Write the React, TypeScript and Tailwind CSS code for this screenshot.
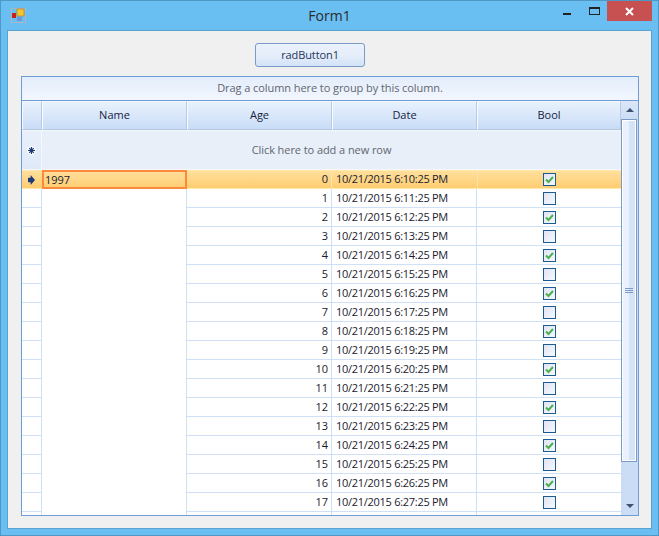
const rows = Array.from({ length: 19 }, (_, i) => i);

function time(i: number) {
  const m = 10 + i;
  return `10/21/2015 6:${m}:25 PM`;
}

function CheckBox({ checked }: { checked: boolean }) {
  return (
    <div className="flex h-[13px] w-[13px] items-center justify-center border border-[#1c5b92] bg-gradient-to-br from-[#dfe5f4] to-[#f6f8fd]">
      {checked && (
        <svg width="11" height="11" viewBox="0 0 11 11">
          <path d="M2 5.5 L4.5 8 L9 3" fill="none" stroke="#4cb04c" strokeWidth="2" />
        </svg>
      )}
    </div>
  );
}

function HeaderCell({ label, className }: { label: string; className: string }) {
  return (
    <div className={`flex items-center justify-center border border-t-[#f4f8fe] border-l-[#f8fbff] border-r-[#b9cbe3] border-b-[#b4c6dc] bg-gradient-to-b from-[#e9f1fd] to-[#c9ddf7] text-[#15233d] ${className}`}>
      {label}
    </div>
  );
}

function Row({ i }: { i: number }) {
  if (i === 0) {
    return (
      <div className="flex h-[19px] shrink-0 border-y border-[#ffeaa8] bg-gradient-to-b from-[#fedf9c] to-[#ffcd70]">
        <div className="flex w-[20px] items-center justify-center">
          <svg className="-ml-[1px]" width="7" height="10" viewBox="0 0 8 9" preserveAspectRatio="none">
            <path d="M0 2.5 H3 V0 L8 4.5 L3 9 V6.5 H0 Z" fill="#1b3b78" />
          </svg>
        </div>
        <div className="-mt-[1px] flex h-[19px] w-[145px] items-center border-2 border-[#fb8b3a] pl-[1px] pt-[1px] text-[#1a1a2e]">1997</div>
        <div className="flex w-[145px] items-center justify-end border-r border-[#f6e3b0] pr-[3px] text-[#1a1a2e]">0</div>
        <div className="flex w-[145px] items-center pl-[4px] tracking-[-0.28px] text-[#1a1a2e]">{time(0)}</div>
        <div className="flex w-[144px] items-center justify-center border-l border-[#f6e3b0]">
          <CheckBox checked />
        </div>
      </div>
    );
  }
  // last row is cut off by the grid, only its lines show
  const partial = i === 18;
  return (
    <div className="flex h-[19px] shrink-0 bg-white text-[#1a1a2e]">
      <div className="w-[20px] border-r border-b border-[#d0e0f6]" />
      <div className="w-[145px] border-r border-[#d0e0f6]" />
      <div className="flex w-[145px] items-center justify-end border-r border-b border-[#d0e0f6] pr-[3px]">{!partial && i}</div>
      <div className="flex w-[145px] items-center border-r border-b border-[#d0e0f6] pl-[4px] tracking-[-0.28px]">{!partial && time(i)}</div>
      <div className="flex w-[144px] items-center justify-center border-b border-[#d0e0f6]">
        {!partial && <CheckBox checked={i % 2 === 0} />}
      </div>
    </div>
  );
}

export default function App() {
  return (
    <div className="flex h-[536px] w-[659px] flex-col border border-[#4f97c4] bg-[#69bef2] font-['Open_Sans',sans-serif] text-[11px]">
      {/* title bar */}
      <div className="relative flex h-[29px] shrink-0 items-center justify-center text-[14px] text-[#2b2b2b]">
        <svg className="absolute left-[10px] top-[7px]" width="15" height="15" viewBox="0 0 15 15">
          <rect x="0.5" y="0.5" width="14" height="14" fill="none" stroke="#a9b7c4" />
          <rect x="6" y="1" width="7" height="7" fill="#f6c52e" stroke="#b5851a" strokeWidth="0.7" />
          <rect x="1" y="5" width="4" height="5" fill="#c8201c" />
          <rect x="6" y="9" width="5" height="4" fill="#6f96dc" />
        </svg>
        Form1
        <div className="absolute left-[562px] top-[12px] h-[2px] w-[8px] bg-[#222]" />
        <div className="absolute left-[588px] top-[6px] h-[8px] w-[11px] border border-t-2 border-[#222]" />
        <div className="absolute right-[6px] top-0 flex h-[20px] w-[45px] items-center justify-center bg-[#c75050]">
          <svg width="9" height="9" viewBox="0 0 9 9">
            <path d="M1 1 L8 8 M8 1 L1 8" stroke="#fff" strokeWidth="2" />
          </svg>
        </div>
      </div>

      {/* client area */}
      <div className="mx-[6px] flex h-[499px] flex-col border border-[#5aa3d0] bg-[#f0f0f0] pb-[12px] pl-[13px] pr-[12px] pt-[12px]">
        <div className="flex h-[24px] shrink-0 pl-[234px]">
          <button className="flex h-[24px] w-[110px] items-center justify-center rounded-[3px] border border-[#7a9bc8] bg-gradient-to-b from-[#eaf1fc] via-[#e6eefb] to-[#d3e2f7] tracking-[-0.1px] text-[#25365a]">
            radButton1
          </button>
        </div>

        {/* grid */}
        <div className="mt-[9px] flex h-[440px] flex-col overflow-hidden border border-[#6f9bd6] bg-white">
          <div className="flex h-[24px] shrink-0 items-center justify-center border-b border-[#6f9bd6] bg-gradient-to-b from-[#e4edfb] to-[#f2f6fe] tracking-[-0.07px] text-[#5f6670]">
            Drag a column here to group by this column.
          </div>
          <div className="flex min-h-0 flex-1">
            <div className="flex w-[599px] shrink-0 flex-col overflow-hidden">
              <div className="flex h-[29px] shrink-0">
                <HeaderCell label="" className="w-[20px]" />
                <HeaderCell label="Name" className="w-[145px]" />
                <HeaderCell label="Age" className="w-[145px]" />
                <HeaderCell label="Date" className="w-[145px]" />
                <HeaderCell label="Bool" className="w-[144px]" />
              </div>
              <div className="flex h-[40px] shrink-0 border-b border-[#f4f8fe]">
                <div className="flex w-[20px] items-center justify-center border-r border-t border-[#f4f8fe] bg-gradient-to-b from-[#e9f0fb] to-[#dfe9f8]">
                  <svg className="-ml-[1px]" width="9" height="9" viewBox="0 0 9 9">
                    <circle cx="4.5" cy="4.5" r="4.5" fill="#fff" />
                    <path d="M4.5 1 V8 M1 4.5 H8 M2.2 2.2 L6.8 6.8 M6.8 2.2 L2.2 6.8" stroke="#1b3b78" strokeWidth="1.2" />
                  </svg>
                </div>
                <div className="flex flex-1 items-center justify-center border-t border-[#f4f8fe] bg-[#e8eff9] pr-[20px] tracking-[-0.07px] text-[#5f6670]">
                  Click here to add a new row
                </div>
              </div>
              {rows.map((i) => (
                <Row key={i} i={i} />
              ))}
            </div>

            {/* scrollbar */}
            <div className="flex w-[17px] shrink-0 flex-col bg-[#cbddf5]">
              <div className="flex h-[18px] shrink-0 items-center justify-center bg-gradient-to-b from-[#dbe7f8] to-[#cbddf5]">
                <div className="h-0 w-0 border-x-[4px] border-b-[4px] border-x-transparent border-b-[#3f4f70]" />
              </div>
              <div className="h-[343px] w-[16px] shrink-0 border border-[#7b99c8] bg-[linear-gradient(90deg,#eaf1fc_50%,#d5e3f7_50%)] outline outline-white -outline-offset-2">
                <div className="flex h-full flex-col items-center justify-center gap-[1px]">
                  <div className="h-px w-[8px] bg-[#7b99c8]" />
                  <div className="h-px w-[8px] bg-[#7b99c8]" />
                  <div className="h-px w-[8px] bg-[#7b99c8]" />
                </div>
              </div>
              <div className="flex flex-1 items-end justify-center pb-[7px]">
                <div className="h-0 w-0 border-x-[4px] border-t-[4px] border-x-transparent border-t-[#3f4f70]" />
              </div>
            </div>
          </div>
        </div>
      </div>
    </div>
  );
}
